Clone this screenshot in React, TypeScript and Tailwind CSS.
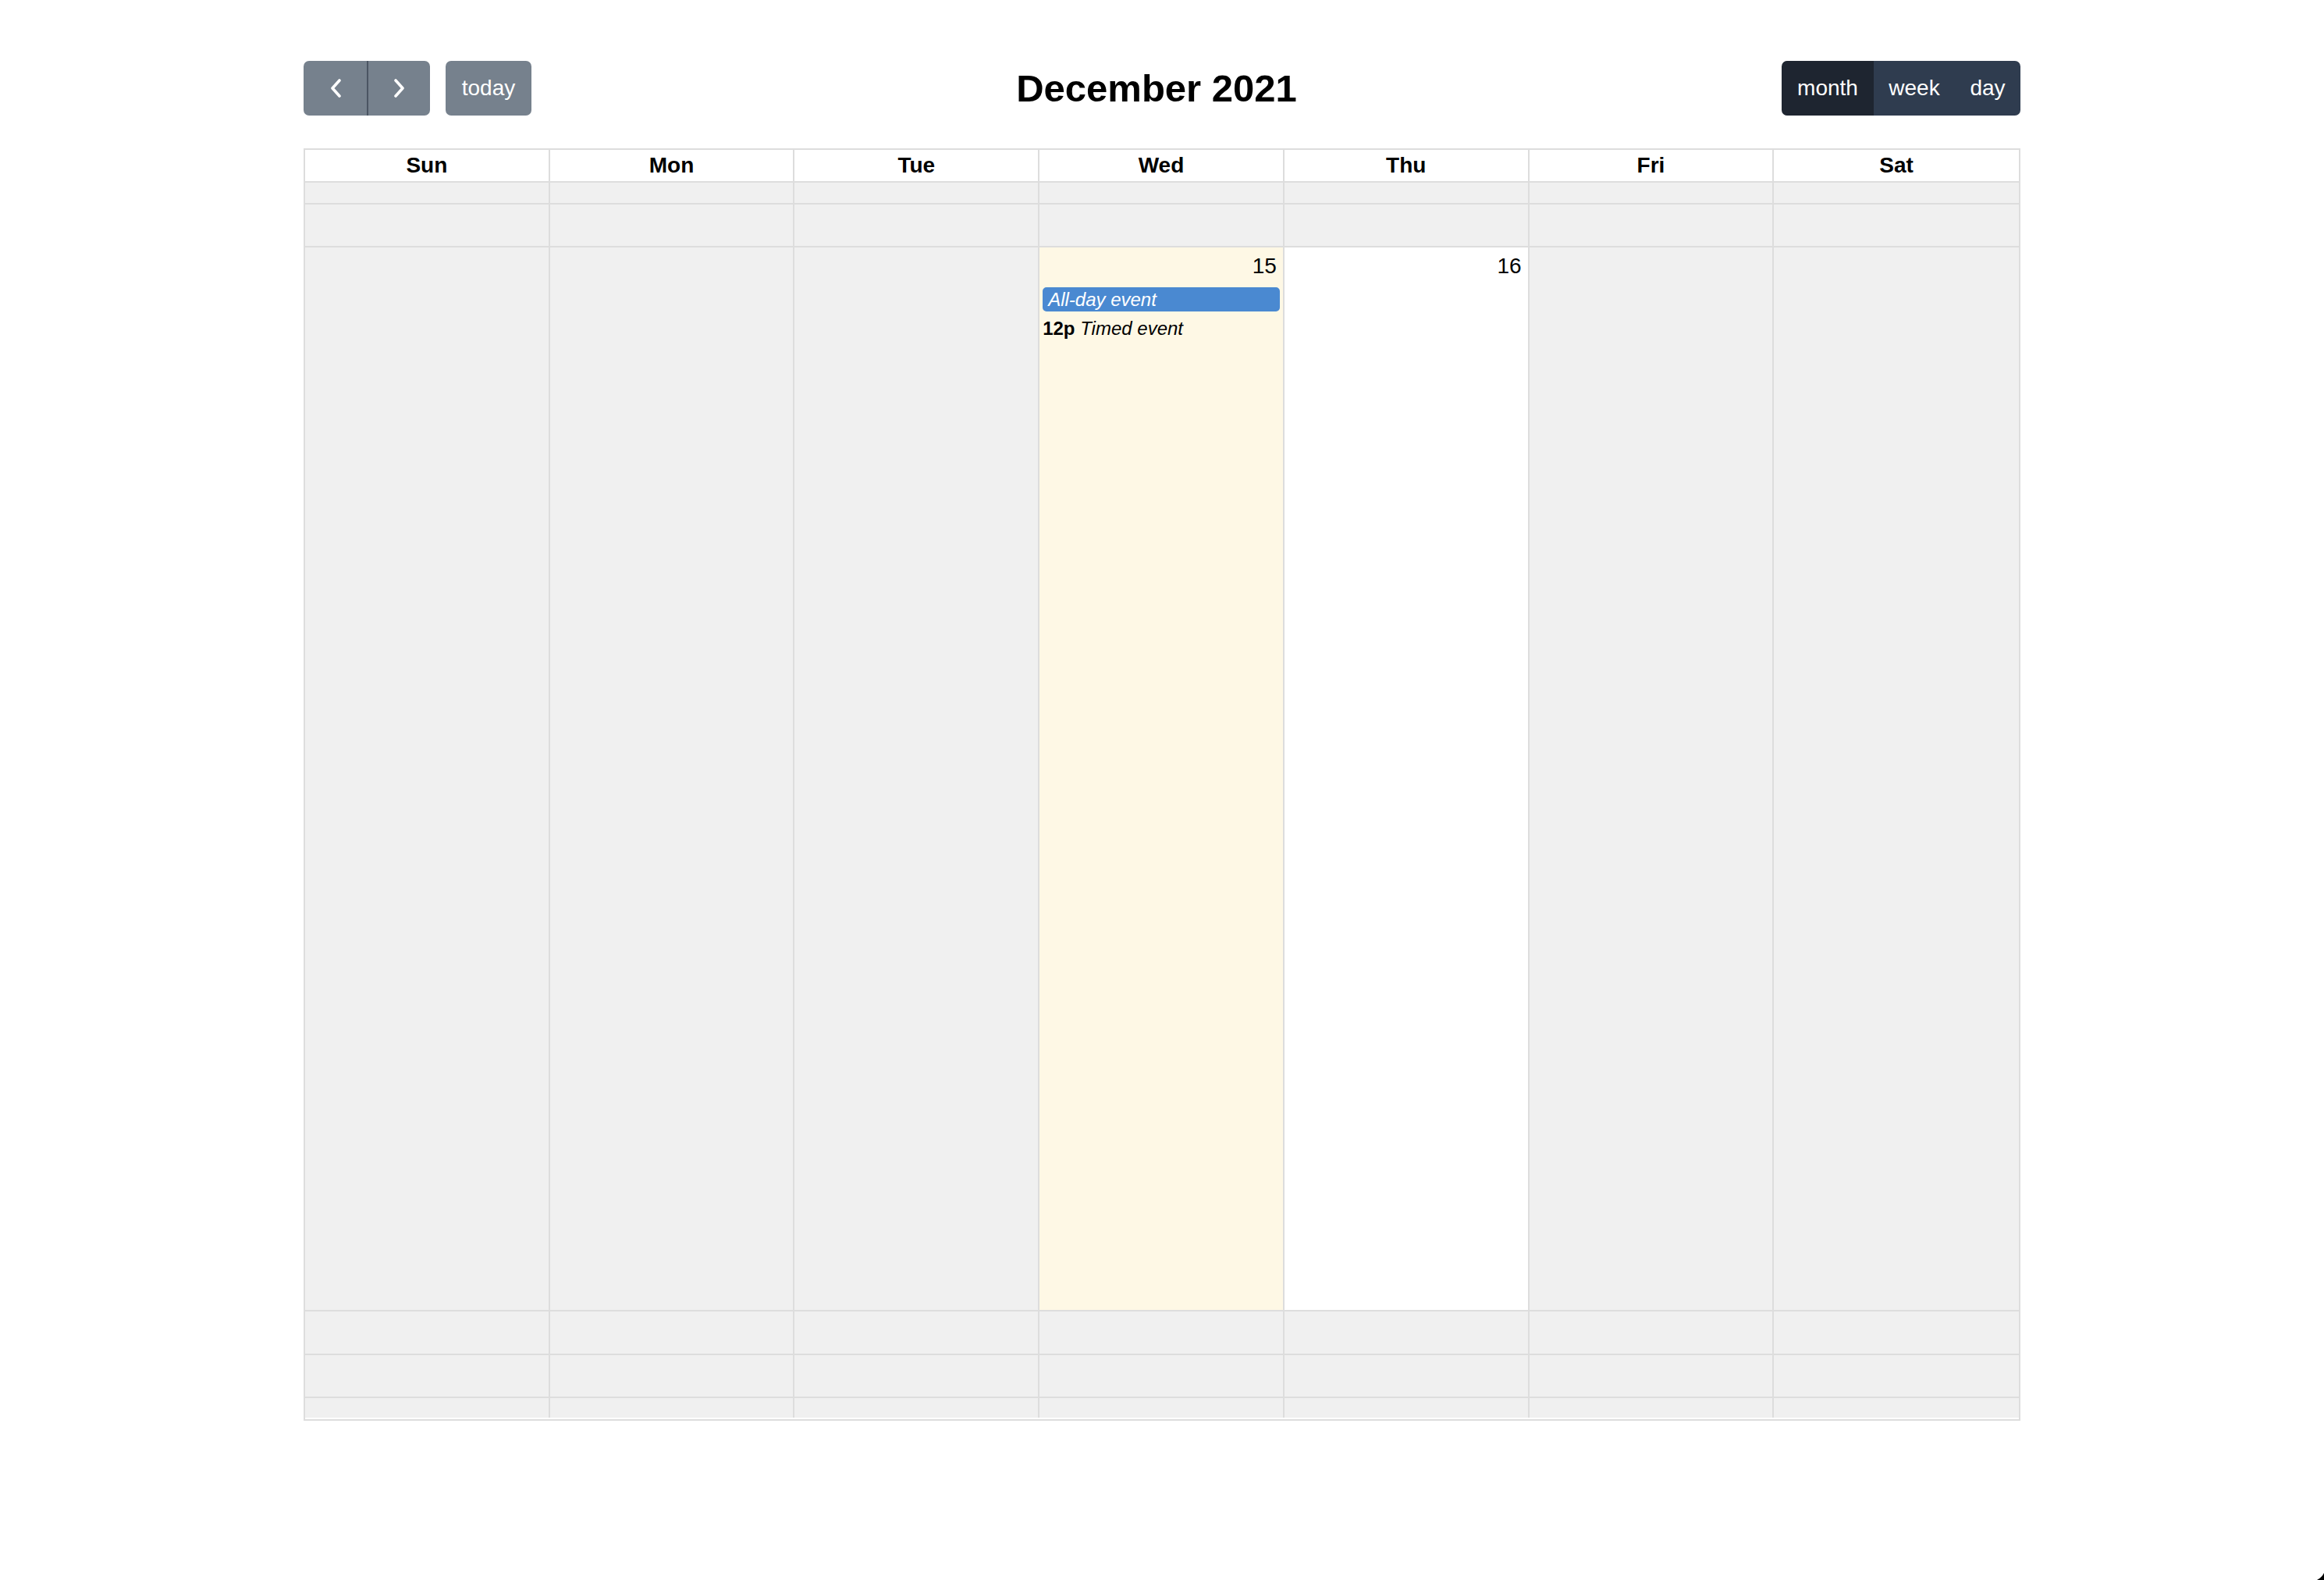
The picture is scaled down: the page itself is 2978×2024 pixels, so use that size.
import React from "react";

const days = ["Sun", "Mon", "Tue", "Wed", "Thu", "Fri", "Sat"];

function GreyRow({ h, last }: { h: string; last?: boolean }) {
  return (
    <div className={`grid grid-cols-7 ${last ? "" : "border-b-2 border-[#dddddd]"}`}>
      {days.map((d, i) => (
        <div
          key={d}
          className={`${h} bg-[#f0f0f0] ${i < 6 ? "border-r-2 border-[#dddddd]" : ""}`}
        />
      ))}
    </div>
  );
}

export default function App() {
  return (
    <div className="relative min-h-screen bg-white text-black font-['Liberation_Sans',Arial,Helvetica,sans-serif]">
      <div className="mx-auto w-[2200px] pt-[78px]">
        {/* toolbar */}
        <div className="mb-[42px] flex h-[70px] items-center justify-between">
          <div className="flex items-center gap-[20px]">
            <div className="flex h-[70px] overflow-hidden rounded-[7px] bg-[#76818d]">
              <button className="flex w-[81px] items-center justify-center">
                <svg width="16" height="24" viewBox="0 0 16 24" fill="none">
                  <path d="M13 2 L4 12 L13 22" stroke="white" strokeWidth="3.6" strokeLinecap="round" strokeLinejoin="round" />
                </svg>
              </button>
              <div className="w-[2px] bg-[#4b5563]" />
              <button className="flex w-[79px] items-center justify-center">
                <svg width="16" height="24" viewBox="0 0 16 24" fill="none">
                  <path d="M3 2 L12 12 L3 22" stroke="white" strokeWidth="3.6" strokeLinecap="round" strokeLinejoin="round" />
                </svg>
              </button>
            </div>
            <button className="h-[70px] w-[110px] rounded-[7px] bg-[#76818d] text-[28px] text-white">
              today
            </button>
          </div>
          <h2 className="text-[49px] font-bold leading-none">December 2021</h2>
          <div className="flex h-[70px] overflow-hidden rounded-[7px] text-[28px] text-white">
            <button className="w-[118px] bg-[#1e2530]">month</button>
            <button className="w-[104px] bg-[#2f3c4f]">week</button>
            <button className="w-[84px] bg-[#2f3c4f]">day</button>
          </div>
        </div>

        {/* table */}
        <div className="border-2 border-[#dddddd]">
          <div className="grid grid-cols-7 border-b-2 border-[#dddddd]">
            {days.map((d, i) => (
              <div
                key={d}
                className={`h-[40px] bg-white pt-[4px] text-center text-[28px] font-bold leading-[32px] ${i < 6 ? "border-r-2 border-[#dddddd]" : ""}`}
              >
                {d}
              </div>
            ))}
          </div>
          <GreyRow h="h-[26px]" />
          <GreyRow h="h-[53px]" />
          <div className="grid grid-cols-7 border-b-2 border-[#dddddd]">
            {days.map((d, i) => {
              const base = `h-[1361px] ${i < 6 ? "border-r-2 border-[#dddddd]" : ""}`;
              if (i === 3) {
                return (
                  <div key={d} className={`${base} bg-[#fef8e5]`}>
                    <div className="p-[8px] pb-[8px] text-right text-[28px] leading-[32px]">15</div>
                    <div className="mx-[4px] mt-[3px] rounded-[5px] border-2 border-[#4a89d1] bg-[#4a89d1] pl-[5px] pr-[2px] text-[24px] italic leading-[27px] text-white">
                      All-day event
                    </div>
                    <div className="mx-[4px] mt-[8px] text-[24px] leading-[27px]">
                      <span className="font-bold">12p</span> <span className="italic">Timed event</span>
                    </div>
                  </div>
                );
              }
              if (i === 4) {
                return (
                  <div key={d} className={`${base} bg-white`}>
                    <div className="p-[8px] text-right text-[28px] leading-[32px]">16</div>
                  </div>
                );
              }
              return <div key={d} className={`${base} bg-[#f0f0f0]`} />;
            })}
          </div>
          <GreyRow h="h-[54px]" />
          <GreyRow h="h-[53px]" />
          <GreyRow h="h-[25px]" last />
          <div className="h-[2px] bg-white" />
        </div>
      </div>
      <svg className="fixed bottom-0 right-0" width="9" height="9" viewBox="0 0 9 9">
        <path d="M0 9 Q6 6 9 0 L9 9 Z" fill="black" />
      </svg>
    </div>
  );
}
